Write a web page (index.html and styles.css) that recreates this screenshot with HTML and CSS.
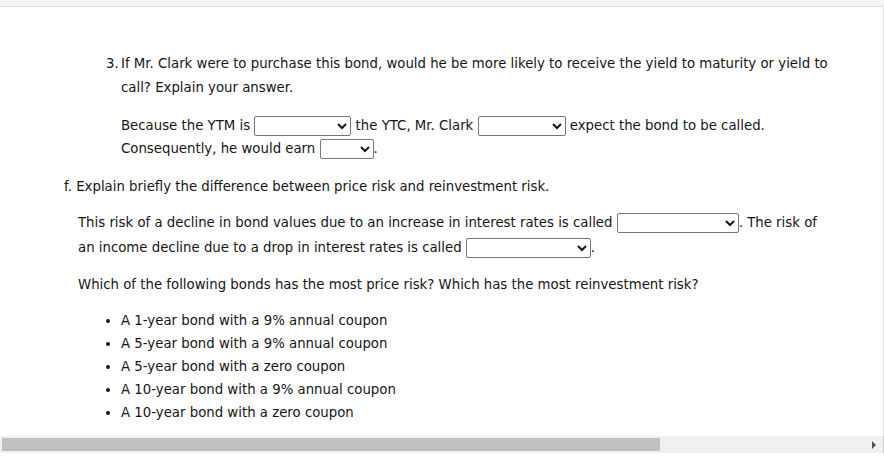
FILE: index.html
```html
<!DOCTYPE html>
<html lang="en">
<head>
  <meta charset="UTF-8">
  <title>Bond risk questions</title>
  <link rel="stylesheet" href="styles.css">
</head>
<body>
  <div class="topbar"></div>
  <div class="frame">
    <div class="content">
      <div class="q3">
        <span class="num">3.</span>
        <p class="qtext">If Mr. Clark were to purchase this bond, would he be more likely to receive the yield to maturity or yield to call? Explain your answer.</p>
      </div>
      <p class="answer3">Because the YTM is <select class="sel w97"><option></option><option>above</option><option>below</option></select> the YTC, Mr. Clark <select class="sel w88"><option></option><option>should</option><option>should not</option></select> expect the bond to be called. Consequently, he would earn <select class="sel w54"><option></option><option>YTM</option><option>YTC</option></select>.</p>

      <p class="part">f. Explain briefly the difference between price risk and reinvestment risk.</p>
      <p class="risk">This risk of a decline in bond values due to an increase in interest rates is called <select class="sel w122"><option></option><option>price risk</option><option>reinvestment risk</option></select>. The risk of an income decline due to a drop in interest rates is called <select class="sel w125"><option></option><option>price risk</option><option>reinvestment risk</option></select>.</p>

      <p class="which">Which of the following bonds has the most price risk? Which has the most reinvestment risk?</p>
      <ul class="bonds">
        <li>A 1-year bond with a 9% annual coupon</li>
        <li>A 5-year bond with a 9% annual coupon</li>
        <li>A 5-year bond with a zero coupon</li>
        <li>A 10-year bond with a 9% annual coupon</li>
        <li>A 10-year bond with a zero coupon</li>
      </ul>
    </div>
  </div>
  <div class="hscroll">
    <div class="thumb"></div>
    <div class="arrow"></div>
  </div>
</body>
</html>
```

FILE: styles.css
```css
body {
  margin: 0;
  font-family: Verdana, "DejaVu Sans", sans-serif;
  font-size: 13.3px;
  color: #151515;
  background-color: #fff;
}
p {
  margin: 0;
}
.topbar {
  height: 6px;
  background-color: #f5f5f5;
  border-bottom: 1px solid #dcdcdc;
}
.frame {
  height: 429px;
  overflow: hidden;
  border-right: 1px solid #e4e4e4;
  box-sizing: border-box;
}
.content {
  width: 770px;
  margin-left: 64px;
  padding-top: 45px;
}
.q3 {
  display: flex;
  margin-left: 42px;
  line-height: 24px;
}
.num {
  width: 15px;
  flex-shrink: 0;
}
.answer3 {
  margin: 14px 0 0 57px;
  line-height: 23px;
}
.part {
  margin-top: 15px;
  line-height: 24px;
}
.risk {
  margin: 11px 0 0 14px;
  line-height: 25px;
}
.which {
  margin: 13px 0 0 14px;
  line-height: 24px;
}
.bonds {
  margin: 12px 0 0 14px;
  padding-left: 43px;
  line-height: 23px;
}
.sel {
  height: 20px;
  font-family: inherit;
  font-size: 12px;
  vertical-align: middle;
  background-color: #fff;
  border: 1px solid #767676;
  border-radius: 2px;
  color: #151515;
}
.w97 { width: 97px; }
.w88 { width: 88px; }
.w54 { width: 54px; }
.w122 { width: 122px; }
.w125 { width: 125px; }
.hscroll {
  height: 17px;
  background-color: #f0f0f0;
  display: flex;
  align-items: center;
  padding: 0 2px;
  border-right: 1px solid #d0d0d0;
}
.thumb {
  width: 658px;
  height: 13px;
  background-color: #c1c1c1;
}
.arrow {
  margin-left: auto;
  margin-right: 5px;
  width: 0;
  height: 0;
  border-top: 4px solid transparent;
  border-bottom: 4px solid transparent;
  border-left: 4px solid #505050;
}
```
